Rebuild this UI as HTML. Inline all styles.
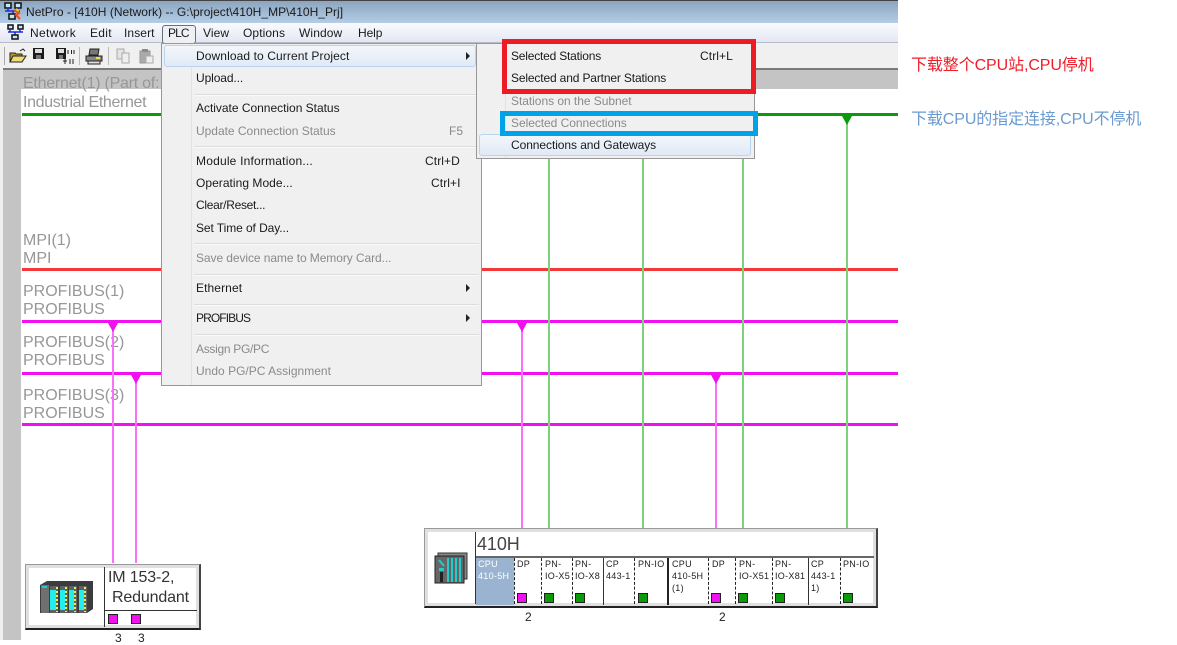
<!DOCTYPE html>
<html><head><meta charset="utf-8">
<style>
html,body{margin:0;padding:0;background:#fff;}
body{width:1177px;height:640px;position:relative;overflow:hidden;font-family:"Liberation Sans","Noto Sans CJK SC",sans-serif;}
.a{position:absolute;}
.t{position:absolute;white-space:nowrap;line-height:14px;font-size:12px;color:#1a1a1a;letter-spacing:.1px;}
.g{color:#8a8a8a;}
.n{position:absolute;white-space:nowrap;font-size:16px;line-height:18px;color:#979797;}
.h{position:absolute;left:22px;width:876px;height:3px;}
.v{position:absolute;width:2px;}
.mg{background:#fa70fa;}
.gr{background:#7ad27a;}
.s{position:absolute;left:194px;width:285px;height:1px;background:#dcdcdc;border-bottom:1px solid #fafafa;}
.m{position:absolute;white-space:nowrap;font-size:9px;line-height:12px;color:#222;letter-spacing:.3px;}
.q{position:absolute;width:8px;height:8px;border:1px solid #222;top:593px;}
.d{position:absolute;top:558px;height:46px;border-left:1px dashed #222;width:0;}
.tri{position:absolute;width:0;height:0;border-left:5px solid transparent;border-right:5px solid transparent;border-top:9px solid;}
</style></head><body>

<!-- title bar -->
<div class="a" style="left:0;top:0;width:898px;height:23px;background:linear-gradient(#8ba5c0,#b5cde6);border-top:1px solid #444;box-sizing:border-box"></div>
<svg class="a" style="left:3px;top:2px" width="20" height="19" viewBox="0 0 20 19"><rect x="2" y="1" width="6" height="5" fill="#bfe8f0" stroke="#111" stroke-width="1.5"/><rect x="12" y="1" width="6" height="5" fill="#bfe8f0" stroke="#111" stroke-width="1.5"/><path d="M2 9h15M5 6v3M15 6v3M10 9v4" stroke="#1a2ae0" stroke-width="1.5" fill="none"/><rect x="6" y="12" width="6" height="5" fill="#bfe8f0" stroke="#111" stroke-width="1.5"/><path d="M11 8l5 3-3 2 4 4" stroke="#e8501c" stroke-width="2" fill="none"/><path d="M13 7l3 2" stroke="#f0d020" stroke-width="2"/></svg>
<div class="t" style="left:26px;top:5px;letter-spacing:.03px">NetPro - [410H (Network) -- G:\project\410H_MP\410H_Prj]</div>

<!-- menu bar -->
<div class="a" style="left:0;top:23px;width:898px;height:20px;background:linear-gradient(#fafbfe,#e4e7f3);border-bottom:1px solid #b8bcc8;box-sizing:border-box"></div>
<svg class="a" style="left:7px;top:24px" width="17" height="16" viewBox="0 0 17 16"><rect x="1" y="1" width="5" height="4" fill="#bfe8f0" stroke="#111" stroke-width="1.5"/><rect x="11" y="1" width="5" height="4" fill="#bfe8f0" stroke="#111" stroke-width="1.5"/><path d="M1 8h15M3 5v3M13 5v3M8 8v3" stroke="#1a2ae0" stroke-width="1.5" fill="none"/><rect x="5" y="11" width="6" height="4" fill="#bfe8f0" stroke="#111" stroke-width="1.5"/></svg>
<div class="t" style="left:30px;top:26px;letter-spacing:.3px">Network</div>
<div class="t" style="left:90px;top:26px;letter-spacing:.3px">Edit</div>
<div class="t" style="left:124px;top:26px;letter-spacing:.1px">Insert</div>
<div class="a" style="left:162px;top:25px;width:32px;height:17px;border:1px solid #6a7078;border-radius:3px;background:#eef0f4;box-sizing:content-box"></div>
<div class="t" style="left:168px;top:26px;letter-spacing:-.9px">PLC</div>
<div class="t" style="left:203px;top:26px">View</div>
<div class="t" style="left:243px;top:26px">Options</div>
<div class="t" style="left:299px;top:26px">Window</div>
<div class="t" style="left:358px;top:26px;letter-spacing:-.1px">Help</div>

<!-- toolbar -->
<div class="a" style="left:0;top:43px;width:898px;height:25px;background:#f0f0f0"></div>
<div class="a" style="left:4px;top:47px;width:1px;height:18px;background:#aaa"></div>
<svg class="a" style="left:9px;top:47px" width="18" height="17" viewBox="0 0 18 17"><path d="M1 15V6h5l1 1h6v8z" fill="#b89a30" stroke="#222"/><path d="M1 15l3-6h13l-4 6z" fill="#f0dc70" stroke="#222"/><path d="M11 4l3-2 2 2" stroke="#222" fill="none"/></svg>
<svg class="a" style="left:33px;top:48px" width="11" height="11" viewBox="0 0 11 11"><rect x="0" y="0" width="11" height="11" fill="#1c1c1c"/><rect x="2" y="1" width="7" height="4" fill="#ddd"/><rect x="3" y="7" width="5" height="4" fill="#777"/></svg>
<svg class="a" style="left:56px;top:47px" width="19" height="18" viewBox="0 0 19 18"><rect x="0" y="1" width="10" height="11" fill="#1c1c1c"/><rect x="2" y="2" width="6" height="4" fill="#ddd"/><rect x="3" y="8" width="4" height="4" fill="#777"/><path d="M12 3v4M15.500 3v4M18 3v4M7 14h4M9 12v5M14 12v5M17 12v5" stroke="#222" fill="none"/></svg>
<div class="a" style="left:79px;top:47px;width:1px;height:18px;background:#bbb"></div>
<svg class="a" style="left:85px;top:48px" width="18" height="17" viewBox="0 0 18 17"><path d="M5 1h9l-1 6H4z" fill="#777" stroke="#222"/><path d="M1 8h16v5H1z" fill="#888" stroke="#222"/><path d="M11 9h4v2h-4z" fill="#f0dc50"/><path d="M3 13h12v3H3z" fill="#ddd" stroke="#222"/></svg>
<div class="a" style="left:108px;top:47px;width:1px;height:18px;background:#bbb"></div>
<svg class="a" style="left:115px;top:48px" width="17" height="16" viewBox="0 0 17 16"><path d="M2 1h7v10H2z" fill="#e4e4e4" stroke="#aaa"/><path d="M7 5h7v10H7z" fill="#eee" stroke="#aaa"/></svg>
<svg class="a" style="left:138px;top:48px" width="17" height="16" viewBox="0 0 17 16"><path d="M2 3h10v12H2z" fill="#aaa" stroke="#999"/><path d="M4 1h6v3H4z" fill="#8c8c8c"/><path d="M8 8h7v7H8z" fill="#eee" stroke="#aaa"/></svg>

<!-- client area -->
<div class="a" style="left:0;top:68px;width:898px;height:572px;background:#c4c4c4;border-top:2px solid #7a7a7a;box-sizing:border-box"></div>
<div class="a" style="left:0;top:68px;width:3px;height:572px;background:#f0f0f0"></div>
<div class="a" style="left:21px;top:89px;width:877px;height:551px;background:#fff"></div>

<div class="n" style="left:23px;top:75px;letter-spacing:-.25px">Ethernet(1) (Part of: 410H)</div>
<div class="n" style="left:23px;top:94px;letter-spacing:-.35px">Industrial Ethernet</div>
<div class="h" style="top:113px;background:#0a9a0a"></div>
<div class="n" style="left:23px;top:232px">MPI(1)</div>
<div class="n" style="left:23px;top:250px">MPI</div>
<div class="h" style="top:268px;background:#f43838"></div>
<div class="n" style="left:23px;top:283px">PROFIBUS(1)</div>
<div class="n" style="left:23px;top:301px">PROFIBUS</div>
<div class="h" style="top:320px;background:#f010f0"></div>
<div class="n" style="left:23px;top:334px">PROFIBUS(2)</div>
<div class="n" style="left:23px;top:352px">PROFIBUS</div>
<div class="h" style="top:372px;background:#f010f0"></div>
<div class="n" style="left:23px;top:387px">PROFIBUS(3)</div>
<div class="n" style="left:23px;top:405px">PROFIBUS</div>
<div class="h" style="top:423px;background:#f010f0"></div>

<!-- vertical connectors -->
<div class="v mg" style="left:112px;top:323px;height:240px"></div>
<div class="v mg" style="left:135px;top:375px;height:188px"></div>
<div class="v mg" style="left:521px;top:323px;height:205px"></div>
<div class="v mg" style="left:715px;top:375px;height:153px"></div>
<div class="v gr" style="left:548px;top:155px;height:373px"></div>
<div class="v gr" style="left:642px;top:155px;height:373px"></div>
<div class="v gr" style="left:742px;top:155px;height:373px"></div>
<div class="v gr" style="left:846px;top:116px;height:412px"></div>
<div class="tri" style="left:108px;top:323px;border-top-color:#f010f0"></div>
<div class="tri" style="left:131px;top:375px;border-top-color:#f010f0"></div>
<div class="tri" style="left:517px;top:323px;border-top-color:#f010f0"></div>
<div class="tri" style="left:711px;top:375px;border-top-color:#f010f0"></div>
<div class="tri" style="left:842px;top:116px;border-top-color:#0a9a0a"></div>

<!-- 410H station -->
<div class="a" style="left:424px;top:528px;width:454px;height:80px;background:#fff;border:1px solid #999;border-right:2px solid #444;border-bottom:2px solid #222;box-sizing:border-box;box-shadow:inset 0 0 0 3px #e0e0e0"></div>
<div class="a" style="left:475px;top:532px;width:1px;height:72px;background:#333"></div>
<div class="a" style="left:476px;top:556px;width:398px;height:2px;background:#666"></div>
<div class="a" style="left:476px;top:558px;width:38px;height:47px;background:#9ab3d0"></div>
<div class="a" style="left:477px;top:533px;font-size:18px;line-height:22px;color:#444;letter-spacing:-.1px">410H</div>
<svg class="a" style="left:434px;top:552px" width="34" height="32" viewBox="0 0 34 32"><rect x="4" y="1" width="29" height="26" fill="#888" stroke="#333"/><rect x="1" y="4" width="29" height="27" fill="#666" stroke="#222"/><path d="M5 8l5 6" stroke="#2cc" stroke-width="2"/><rect x="5" y="16" width="5" height="3" fill="#2cc"/><rect x="6" y="20" width="3" height="10" fill="#222"/><path d="M13 6h2v24h-2zM17 6h2v24h-2zM21 6h2v24h-2zM25 6h2v24h-2z" fill="#2cc"/></svg>
<div class="m" style="left:478px;top:558px;color:#fff">CPU<br>410-5H</div>
<div class="d" style="left:514px"></div>
<div class="m" style="left:517px;top:558px">DP</div>
<div class="q" style="left:517px;background:#f010f0"></div>
<div class="d" style="left:541px"></div>
<div class="m" style="left:545px;top:558px">PN-<br>IO-X5</div>
<div class="q" style="left:544px;background:#0a9a0a"></div>
<div class="d" style="left:572px"></div>
<div class="m" style="left:575px;top:558px">PN-<br>IO-X8</div>
<div class="q" style="left:575px;background:#0a9a0a"></div>
<div class="a" style="left:603px;top:558px;width:1px;height:47px;background:#333"></div>
<div class="m" style="left:606px;top:558px">CP<br>443-1</div>
<div class="d" style="left:634px"></div>
<div class="m" style="left:638px;top:558px">PN-IO</div>
<div class="q" style="left:638px;background:#0a9a0a"></div>
<div class="a" style="left:667px;top:558px;width:2px;height:47px;background:#222"></div>
<div class="m" style="left:672px;top:558px;line-height:12px">CPU<br>410-5H<br>(1)</div>
<div class="d" style="left:708px"></div>
<div class="m" style="left:712px;top:558px">DP</div>
<div class="q" style="left:711px;background:#f010f0"></div>
<div class="d" style="left:735px"></div>
<div class="m" style="left:739px;top:558px">PN-<br>IO-X51</div>
<div class="q" style="left:738px;background:#0a9a0a"></div>
<div class="d" style="left:772px"></div>
<div class="m" style="left:775px;top:558px">PN-<br>IO-X81</div>
<div class="q" style="left:775px;background:#0a9a0a"></div>
<div class="a" style="left:808px;top:558px;width:1px;height:47px;background:#333"></div>
<div class="m" style="left:811px;top:558px">CP<br>443-1<br>1)</div>
<div class="d" style="left:840px"></div>
<div class="m" style="left:843px;top:558px">PN-IO</div>
<div class="q" style="left:843px;background:#0a9a0a"></div>
<div class="a" style="left:525px;top:610px;font-size:12px;line-height:14px;color:#222">2</div>
<div class="a" style="left:719px;top:610px;font-size:12px;line-height:14px;color:#222">2</div>

<!-- IM 153-2 station -->
<div class="a" style="left:25px;top:564px;width:176px;height:66px;background:#fff;border:1px solid #999;border-right:2px solid #444;border-bottom:2px solid #222;box-sizing:border-box;box-shadow:inset 0 0 0 3px #e0e0e0"></div>
<div class="a" style="left:104px;top:567px;width:1px;height:60px;background:#333"></div>
<div class="a" style="left:105px;top:610px;width:92px;height:1px;background:#333"></div>
<svg class="a" style="left:39px;top:580px" width="55" height="34" viewBox="0 0 55 34"><path d="M8 1h46v28l-6 4H1V5z" fill="#3c3c3c"/><rect x="2" y="5" width="8" height="28" fill="#707070"/><rect x="3" y="6" width="5" height="2" fill="#2cc"/><rect x="11" y="6" width="8" height="27" fill="#606060"/><rect x="21" y="6" width="8" height="27" fill="#606060"/><rect x="30" y="6" width="8" height="27" fill="#606060"/><rect x="40" y="6" width="8" height="27" fill="#606060"/><rect x="11" y="10" width="6" height="20" fill="#2ee"/><rect x="21" y="10" width="5" height="20" fill="#2ee"/><rect x="30" y="10" width="5" height="20" fill="#2ee"/><rect x="40" y="10" width="5" height="20" fill="#2ee"/><path d="M18 7v25M27 7v25M36 7v25M46 7v25" stroke="#ee4" stroke-dasharray="2 2" stroke-width="2"/></svg>
<div class="a" style="left:108px;top:568px;font-size:16px;line-height:20px;color:#333;white-space:nowrap;letter-spacing:-.15px">IM 153-2,<br><span style="margin-left:4px">Redundant</span></div>
<div class="q" style="left:108px;top:614px;background:#f010f0"></div>
<div class="q" style="left:131px;top:614px;background:#f010f0"></div>
<div class="a" style="left:115px;top:631px;font-size:12px;line-height:14px;color:#222">3</div>
<div class="a" style="left:138px;top:631px;font-size:12px;line-height:14px;color:#222">3</div>

<!-- PLC menu -->
<div class="a" style="left:161px;top:43px;width:321px;height:343px;background:#f0f0f0;border:1px solid #979797;box-sizing:border-box"></div>
<div class="a" style="left:191px;top:44px;width:1px;height:341px;background:#e2e2e2"></div>
<div class="a" style="left:164px;top:45px;width:312px;height:22px;box-sizing:border-box;border:1px solid #b8d4ee;border-radius:3px;background:linear-gradient(#f4f7fb,#e0e9f5)"></div>
<div class="t" style="left:196px;top:49px">Download to Current Project</div>
<div class="t" style="left:196px;top:71px;letter-spacing:-.1px">Upload...</div>
<div class="s" style="top:94px"></div>
<div class="t" style="left:196px;top:101px;letter-spacing:-.02px">Activate Connection Status</div>
<div class="t g" style="left:196px;top:124px;letter-spacing:-.02px">Update Connection Status</div>
<div class="t g" style="left:449px;top:124px">F5</div>
<div class="s" style="top:146px"></div>
<div class="t" style="left:196px;top:154px;letter-spacing:.2px">Module Information...</div>
<div class="t" style="left:425px;top:154px">Ctrl+D</div>
<div class="t" style="left:196px;top:176px;letter-spacing:.04px">Operating Mode...</div>
<div class="t" style="left:431px;top:176px">Ctrl+I</div>
<div class="t" style="left:196px;top:198px;letter-spacing:-.3px">Clear/Reset...</div>
<div class="t" style="left:196px;top:221px;letter-spacing:-.08px">Set Time of Day...</div>
<div class="s" style="top:243px"></div>
<div class="t g" style="left:196px;top:251px;letter-spacing:-.08px">Save device name to Memory Card...</div>
<div class="s" style="top:274px"></div>
<div class="t" style="left:196px;top:281px">Ethernet</div>
<div class="s" style="top:304px"></div>
<div class="t" style="left:196px;top:311px;letter-spacing:-.9px">PROFIBUS</div>
<div class="s" style="top:334px"></div>
<div class="t g" style="left:196px;top:342px;letter-spacing:-.3px">Assign PG/PC</div>
<div class="t g" style="left:196px;top:364px;letter-spacing:.01px">Undo PG/PC Assignment</div>
<div class="a" style="left:466px;top:52px;border-left:4px solid #222;border-top:4px solid transparent;border-bottom:4px solid transparent"></div>
<div class="a" style="left:466px;top:284px;border-left:4px solid #222;border-top:4px solid transparent;border-bottom:4px solid transparent"></div>
<div class="a" style="left:466px;top:314px;border-left:4px solid #222;border-top:4px solid transparent;border-bottom:4px solid transparent"></div>

<!-- submenu -->
<div class="a" style="left:476px;top:43px;width:279px;height:116px;background:#f0f0f0;border:1px solid #979797;box-sizing:border-box"></div>
<div class="a" style="left:505px;top:44px;width:1px;height:114px;background:#e2e2e2"></div>
<div class="a" style="left:479px;top:134px;width:272px;height:22px;box-sizing:border-box;border:1px solid #b8d4ee;border-radius:3px;background:linear-gradient(#f4f7fb,#e0e9f5)"></div>
<div class="t" style="left:511px;top:49px;letter-spacing:-.2px">Selected Stations</div>
<div class="t" style="left:700px;top:49px">Ctrl+L</div>
<div class="t" style="left:511px;top:71px;letter-spacing:-.15px">Selected and Partner Stations</div>
<div class="t g" style="left:511px;top:94px;letter-spacing:-.04px">Stations on the Subnet</div>
<div class="t g" style="left:511px;top:116px;letter-spacing:-.05px">Selected Connections</div>
<div class="t" style="left:511px;top:138px;letter-spacing:-.07px">Connections and Gateways</div>

<!-- highlight boxes -->
<div class="a" style="left:502px;top:39px;width:254px;height:55px;border:5px solid #ed1c24;box-sizing:border-box"></div>
<div class="a" style="left:500px;top:111px;width:258px;height:25px;border:5px solid #00a2e8;box-sizing:border-box"></div>

<!-- annotations -->
<div class="a" style="left:911px;top:56px;font-size:16px;line-height:20px;color:#f01c28;white-space:nowrap;letter-spacing:-.1px">下载整个CPU站,CPU停机</div>
<div class="a" style="left:911px;top:110px;font-size:16px;line-height:20px;color:#6a9ad0;white-space:nowrap;letter-spacing:-.1px">下载CPU的指定连接,CPU不停机</div>

</body></html>
